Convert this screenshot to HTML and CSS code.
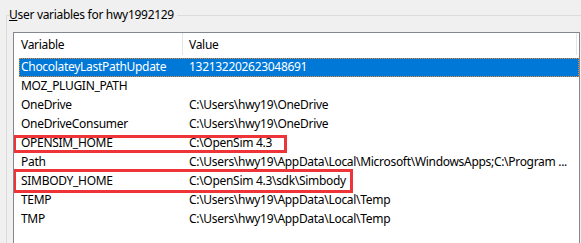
FILE: index.html
```html
<!DOCTYPE html>
<html>
<head>
  <meta charset="utf-8" />
  <title>Environment Variables</title>
  <link rel="stylesheet" href="styles.css">
</head>
<body>
  <fieldset class="group">
    <legend><u>U</u>ser variables for hwy1992129</legend>

    <div class="list">
      <div class="list-header">
        <div class="col-name">Variable</div>
        <div class="col-value">Value</div>
      </div>

      <div class="row selected">
        <div class="col-name">ChocolateyLastPathUpdate</div>
        <div class="col-value">132132202623048691</div>
      </div>
      <div class="row">
        <div class="col-name">MOZ_PLUGIN_PATH</div>
        <div class="col-value"></div>
      </div>
      <div class="row">
        <div class="col-name">OneDrive</div>
        <div class="col-value">C:\Users\hwy19\OneDrive</div>
      </div>
      <div class="row">
        <div class="col-name">OneDriveConsumer</div>
        <div class="col-value">C:\Users\hwy19\OneDrive</div>
      </div>
      <div class="row">
        <div class="col-name">OPENSIM_HOME</div>
        <div class="col-value">C:\OpenSim 4.3</div>
      </div>
      <div class="row">
        <div class="col-name">Path</div>
        <div class="col-value">C:\Users\hwy19\AppData\Local\Microsoft\WindowsApps;C:\Program ...</div>
      </div>
      <div class="row">
        <div class="col-name">SIMBODY_HOME</div>
        <div class="col-value">C:\OpenSim 4.3\sdk\Simbody</div>
      </div>
      <div class="row">
        <div class="col-name">TEMP</div>
        <div class="col-value">C:\Users\hwy19\AppData\Local\Temp</div>
      </div>
      <div class="row">
        <div class="col-name">TMP</div>
        <div class="col-value">C:\Users\hwy19\AppData\Local\Temp</div>
      </div>

      <!-- annotation boxes drawn over the list -->
      <div class="mark mark-opensim"></div>
      <div class="mark mark-simbody"></div>
    </div>
  </fieldset>
</body>
</html>
```

FILE: styles.css
```css
:root {
  --window-bg: #f0f0f0;
  --group-line: #dcdcdc;
  --list-border: #828790;
  --select-bg: #0078d7;
  --mark-red: #ee3439;
}

* {
  box-sizing: border-box;
}

html, body {
  overflow: hidden;
}

body {
  margin: 0;
  background: var(--window-bg);
  font-family: "Noto Sans", "Open Sans", sans-serif;
  font-size: 12px;
  letter-spacing: -0.3px;
  color: #000;
  height: 243px;
}

.group {
  margin: 7px 0 0 6px;
  padding: 0 0 0 6px;
  border: 1px solid var(--group-line);
  border-right: none;
  border-bottom: none;
  min-width: 0;
}

.group legend {
  padding: 0 3px 0 0;
  margin-left: -4px;
  height: 16px;
  line-height: 16px;
}

.list {
  position: relative;
  width: 567px;
  margin-top: 9px;
  height: 211px;
  background: white;
  border: 1px solid var(--list-border);
  border-bottom: none;
  overflow: hidden;
}

.list-header {
  display: flex;
  height: 25px;
  line-height: 24px;
}

.list-header .col-name {
  flex-shrink: 0;
  width: 169px;
  padding-left: 7px;
  border-right: 1px solid #e5e5e5;
  height: 22px;
}

.list-header .col-value {
  flex-shrink: 0;
  width: 394px;
  padding-left: 6px;
  border-right: 1px solid #e5e5e5;
  height: 22px;
}

.row {
  display: flex;
  height: 19px;
  line-height: 18px;
  margin-left: 5px;
  padding-left: 2px;
  white-space: nowrap;
}

.row .col-name {
  flex-shrink: 0;
  width: 168px;
}

.row .col-value {
  flex: 1;
  min-width: 0;
  overflow: hidden;
}

.row.selected {
  background: var(--select-bg);
  color: white;
  border: 1px dotted #f28a2a;
  padding-left: 1px;
  line-height: 16px;
}

.mark {
  position: absolute;
  left: -1px;
  border: 3px solid var(--mark-red);
}

.mark-opensim {
  top: 102px;
  width: 274px;
  height: 18px;
}

.mark-simbody {
  top: 136px;
  width: 340px;
  height: 24px;
}
```
